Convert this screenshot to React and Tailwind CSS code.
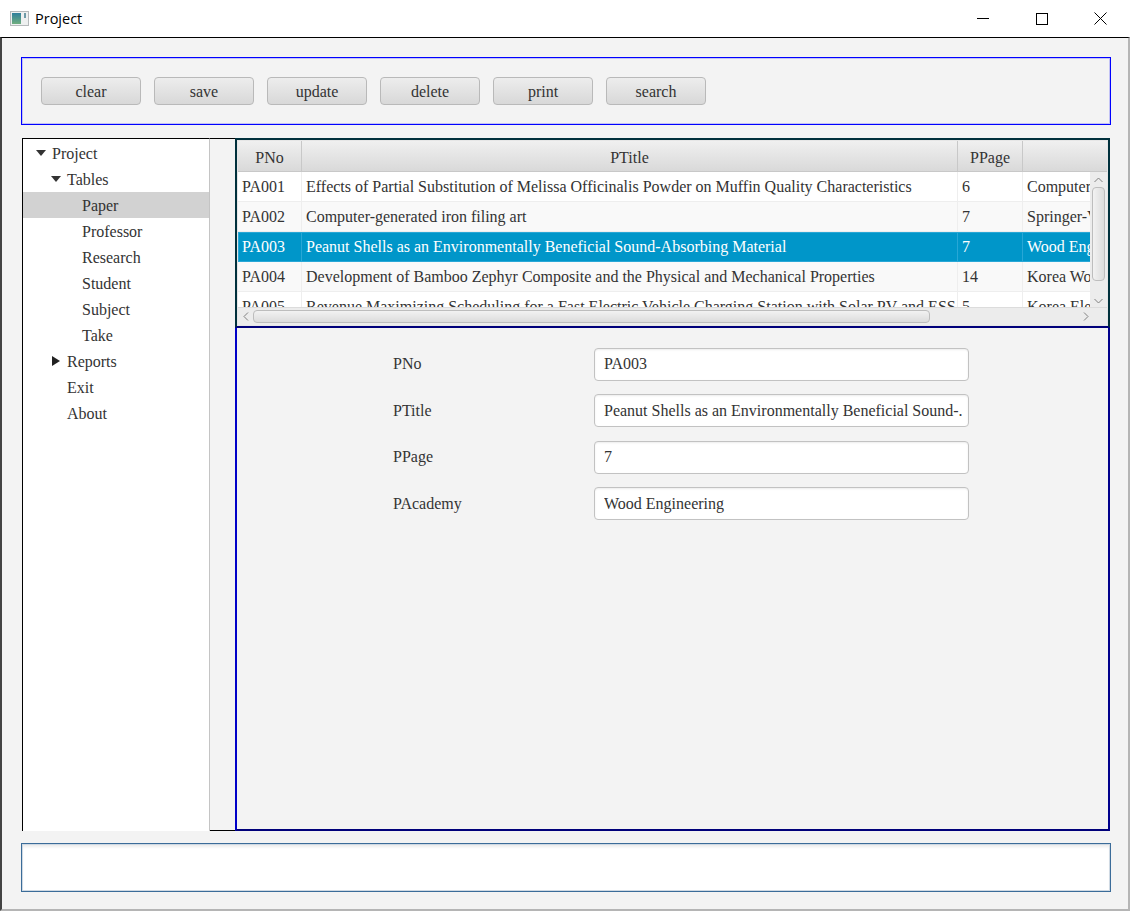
import { useState } from 'react';

const BUTTONS = ['clear', 'save', 'update', 'delete', 'print', 'search'];

const ROWS = [
  ['PA001', 'Effects of Partial Substitution of Melissa Officinalis Powder on Muffin Quality Characteristics', '6', 'Computer'],
  ['PA002', 'Computer-generated iron filing art', '7', 'Springer-V'],
  ['PA003', 'Peanut Shells as an Environmentally Beneficial Sound-Absorbing Material', '7', 'Wood Eng'],
  ['PA004', 'Development of Bamboo Zephyr Composite and the Physical and Mechanical Properties', '14', 'Korea Wo'],
  ['PA005', 'Revenue Maximizing Scheduling for a Fast Electric Vehicle Charging Station with Solar PV and ESS', '5', 'Korea Ele'],
];

const TREE = [
  { label: 'Project', indent: 30, arrow: 'down' },
  { label: 'Tables', indent: 45, arrow: 'down' },
  { label: 'Paper', indent: 60, selected: true },
  { label: 'Professor', indent: 60 },
  { label: 'Research', indent: 60 },
  { label: 'Student', indent: 60 },
  { label: 'Subject', indent: 60 },
  { label: 'Take', indent: 60 },
  { label: 'Reports', indent: 45, arrow: 'right' },
  { label: 'Exit', indent: 45 },
  { label: 'About', indent: 45 },
];

const FIELDS = [
  ['PNo', 'PA003'],
  ['PTitle', 'Peanut Shells as an Environmentally Beneficial Sound-.'],
  ['PPage', '7'],
  ['PAcademy', 'Wood Engineering'],
];

function Arrow({ dir }) {
  return (
    <svg width="10" height="10" viewBox="0 0 10 10" className="shrink-0">
      {dir === 'down' ? <polygon points="0,2 10,2 5,8" fill="#333" /> : <polygon points="1,0 9,5 1,10" fill="#222" />}
    </svg>
  );
}

function TitleBar() {
  return (
    <div className="flex h-[37px] shrink-0 items-center bg-white pl-[10px]">
      <svg width="19" height="15" viewBox="0 0 19 15" className="shrink-0">
        <rect x="0.5" y="0.5" width="18" height="14" fill="#eef0f0" stroke="#b5b9bb" />
        <defs>
          <linearGradient id="appIcon" x1="0" y1="0" x2="0" y2="1">
            <stop offset="0" stopColor="#2f7f9c" />
            <stop offset="1" stopColor="#6fae7e" />
          </linearGradient>
        </defs>
        <rect x="2" y="2" width="9" height="11" fill="url(#appIcon)" />
        <rect x="14" y="2" width="2" height="5" fill="#6f9aa8" />
      </svg>
      <span className="ml-[6px] font-['Open_Sans',sans-serif] text-[14.5px] text-black">Project</span>
      <div className="ml-auto flex h-full items-center">
        <div className="flex w-[59px] justify-center">
          <div className="h-px w-3 bg-black" />
        </div>
        <div className="flex w-[59px] justify-center">
          <div className="h-3 w-3 border border-black" />
        </div>
        <div className="flex w-[59px] justify-center pr-px">
          <svg width="13" height="13" viewBox="0 0 13 13">
            <path d="M0.5 0.5 L12.5 12.5 M12.5 0.5 L0.5 12.5" stroke="#000" strokeWidth="1" fill="none" />
          </svg>
        </div>
      </div>
    </div>
  );
}

function Toolbar() {
  return (
    <div className="flex h-[68px] items-center gap-[13px] border border-[#0000ff] pl-[19px] shadow-[inset_0_0_0_1px_rgba(0,0,255,0.2)]">
      {BUTTONS.map((name) => (
        <button
          key={name}
          className="h-[28px] w-[100px] rounded-[4px] border border-[#b9b9b9] bg-gradient-to-b from-[#ededed] to-[#d8d8d8] pt-px text-[#333]"
        >
          {name}
        </button>
      ))}
    </div>
  );
}

function Tree() {
  return (
    <div className="ml-px flex w-[188px] shrink-0 flex-col border-t border-r border-l border-black border-r-[#c4c4c4] bg-white pt-[1px]">
      {TREE.map((item) => (
        <div
          key={item.label}
          className={`flex h-[26px] shrink-0 items-center text-[#333] ${item.selected ? 'bg-[#d2d2d2]' : ''}`}
        >
          {item.arrow ? (
            <span className="flex shrink-0 justify-end pr-[6px]" style={{ width: item.indent - 1 }}>
              <Arrow dir={item.arrow} />
            </span>
          ) : (
            <span className="shrink-0" style={{ width: item.indent - 1 }} />
          )}
          <span className="pt-[2px]">{item.label}</span>
        </div>
      ))}
    </div>
  );
}

function Chevron({ d }) {
  return (
    <svg width="9" height="9" viewBox="0 0 9 9" className="shrink-0">
      <path d={d} stroke="#808080" strokeWidth="1" fill="none" />
    </svg>
  );
}

function PaperTable() {
  return (
    <div className="flex h-[190px] shrink-0 flex-col border-2 border-[#00303c] border-b-[#00007a] bg-[#e6e6e6] p-px">
      <div className="grid h-[31px] shrink-0 grid-cols-[64px_656px_65px_1fr] border-b border-[#c8c8c8] bg-gradient-to-b from-[#f0f0f0] to-[#d9d9d9] text-[#333]">
        <div className="flex items-center justify-center border-r border-[#c8c8c8] pt-[3px]">PNo</div>
        <div className="flex items-center justify-center border-r border-[#c8c8c8] pt-[3px]">PTitle</div>
        <div className="flex items-center justify-center border-r border-[#c8c8c8] pt-[3px]">PPage</div>
        <div />
      </div>
      <div className="flex h-[135px] shrink-0">
        <div className="w-[852px] shrink-0 overflow-hidden bg-white">
          {ROWS.map((row, i) => {
            const selected = i === 2;
            return (
              <div
                key={row[0]}
                className={`grid h-[30px] grid-cols-[64px_656px_65px_1fr] border-b ${
                  selected
                    ? 'border-[#28a7d6] bg-[#0096c9] text-white shadow-[inset_1px_1px_0_#28a7d6]'
                    : `border-[#eeeeee] text-[#333] ${i % 2 ? 'bg-[#f9f9f9]' : 'bg-white'}`
                }`}
              >
                {row.map((cell, j) => (
                  <div
                    key={j}
                    className={`flex items-center overflow-hidden whitespace-nowrap pl-[4px] ${
                      j < 3 ? `border-r ${selected ? 'border-[#28a7d6]' : 'border-[#eeeeee]'}` : ''
                    }`}
                  >
                    {cell}
                  </div>
                ))}
              </div>
            );
          })}
        </div>
        <div className="flex flex-1 flex-col items-center bg-[#ececec] pt-[4px] pb-[2px]">
          <Chevron d="M0.5 6 L4.5 2 L8.5 6" />
          <div className="mt-[2px] h-[94px] w-[13px] rounded-[4px] border border-[#bdbdbd] bg-gradient-to-r from-[#f2f2f2] to-[#dcdcdc]" />
          <div className="mt-auto">
            <Chevron d="M0.5 3 L4.5 7 L8.5 3" />
          </div>
        </div>
      </div>
      <div className="flex h-[18px] shrink-0 items-center border-t border-[#dcdcdc] bg-[#ececec] pl-[4px]">
        <Chevron d="M6 0.5 L2 4.5 L6 8.5" />
        <div className="ml-[2px] h-[13px] w-[677px] rounded-[4px] border border-[#bdbdbd] bg-gradient-to-b from-[#f2f2f2] to-[#dcdcdc]" />
        <div className="ml-[151px]">
          <Chevron d="M3 0.5 L7 4.5 L3 8.5" />
        </div>
      </div>
    </div>
  );
}

function DetailForm() {
  const [values, setValues] = useState(FIELDS.map((f) => f[1]));
  return (
    <div className="flex flex-1 flex-col gap-[13.5px] border-x-2 border-b-2 border-[#0000c8] border-r-[#00008c] border-b-[#00007a] pt-[19.75px] pl-[156px]">
      {FIELDS.map(([label], i) => (
        <div key={label} className="flex h-[33px] items-center">
          <label className="w-[201px] shrink-0 text-[#333]">{label}</label>
          <input
            value={values[i]}
            onChange={(e) => setValues(values.map((v, k) => (k === i ? e.target.value : v)))}
            className="h-[33px] w-[375px] rounded-[4px] border border-[#c2c2c2] bg-white pr-[1px] pl-[9px] text-[#333] shadow-[inset_0_1px_2px_rgba(0,0,0,0.08)] outline-none"
          />
        </div>
      ))}
    </div>
  );
}

export default function App() {
  return (
    <div className="flex h-[911px] w-[1130px] flex-col overflow-hidden bg-white font-['Liberation_Serif',serif] text-[16px] oldstyle-nums">
      <TitleBar />
      <div className="flex flex-1 flex-col border-t border-l-2 border-b-2 border-r-2 border-t-black border-l-[#444] border-r-[#b5b5b5] border-b-[#b5b5b5] bg-[#f3f3f3] pt-[19px] pr-[17px] pl-[19px]">
        <Toolbar />
        <div className="mt-[13px] flex h-[693px] shrink-0">
          <Tree />
          <div className="w-[25px] shrink-0 border-t border-b border-black" />
          <div className="flex w-[875px] shrink-0 flex-col">
            <PaperTable />
            <DetailForm />
          </div>
        </div>
        <div className="mt-[12px] h-[49px] border border-[#3b6c99] bg-white shadow-[inset_0_0_0_1px_#cfd9e3,inset_0_3px_3px_rgba(0,0,0,0.08)]" />
      </div>
    </div>
  );
}
